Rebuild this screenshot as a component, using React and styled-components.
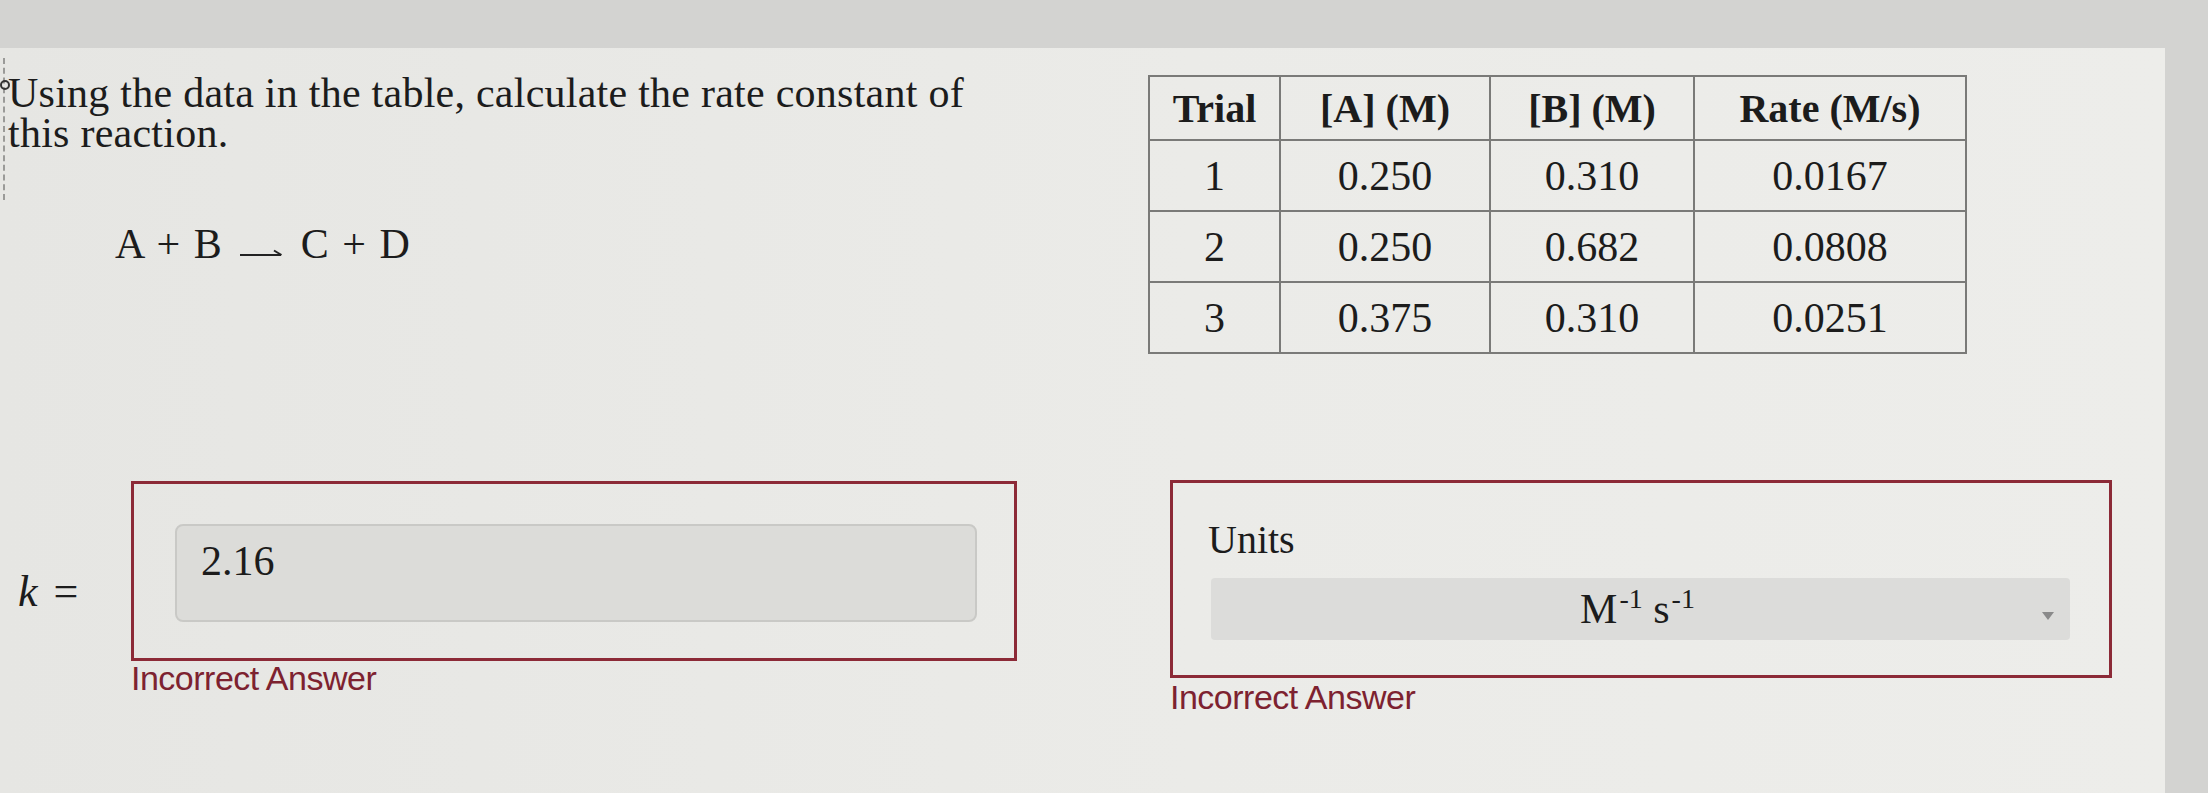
import styled, { createGlobalStyle } from "styled-components";

//Global
const GlobalStyle = createGlobalStyle`
  html, body {
    margin: 0;
    padding: 0;
    background: #d3d3d1;
  }
  body {
    width: 2208px;
    height: 793px;
    overflow: hidden;
    font-family: "Liberation Serif", "Times New Roman", serif;
    color: #1c1c1c;
  }
`;

const rows = [
  ["1", "0.250", "0.310", "0.0167"],
  ["2", "0.250", "0.682", "0.0808"],
  ["3", "0.375", "0.310", "0.0251"],
];

const colWidths = [131, 210, 204, 272];

const Arrow = () => (
  <ArrowSvg width="44" height="12" viewBox="0 0 44 12">
    <path d="M1 9 H42" stroke="#222" strokeWidth="2" fill="none" />
    <path d="M35 4.5 L42.5 9" stroke="#222" strokeWidth="2" fill="none" />
  </ArrowSvg>
);

const App = () => {
  return (
    <>
      <GlobalStyle />
      <Page>
        <TopRow>
          <QuestionBlock>
            <Question>
              Using the data in the table, calculate the rate constant of this
              reaction.
            </Question>
            <Equation>
              A + B <Arrow /> C + D
            </Equation>
          </QuestionBlock>
          <DataTable>
            <colgroup>
              {colWidths.map((w, i) => (
                <col key={i} style={{ width: w }} />
              ))}
            </colgroup>
            <thead>
              <tr>
                <HeadCell>Trial</HeadCell>
                <HeadCell>[A] (M)</HeadCell>
                <HeadCell>[B] (M)</HeadCell>
                <HeadCell>Rate (M/s)</HeadCell>
              </tr>
            </thead>
            <tbody>
              {rows.map((r) => (
                <tr key={r[0]}>
                  {r.map((v, i) => (
                    <Cell key={i}>{v}</Cell>
                  ))}
                </tr>
              ))}
            </tbody>
          </DataTable>
        </TopRow>

        <BottomRow>
          <KLabel>
            <i>k</i>
            <span>=</span>
          </KLabel>
          <AnswerColumn>
            <AnswerBox>
              <AnswerInput>2.16</AnswerInput>
            </AnswerBox>
            <Incorrect $shift={-1}>Incorrect Answer</Incorrect>
          </AnswerColumn>
          <UnitsColumn>
            <UnitsBox>
              <UnitsLabel>Units</UnitsLabel>
              <UnitsSelect>
                <span>
                  M<sup>-1</sup> s<sup>-1</sup>
                </span>
                <Caret />
              </UnitsSelect>
            </UnitsBox>
            <Incorrect $shift={1}>Incorrect Answer</Incorrect>
          </UnitsColumn>
        </BottomRow>
      </Page>
    </>
  );
};

const Page = styled.div`
  margin-top: 48px;
  margin-right: 43px;
  height: 745px;
  background: linear-gradient(90deg, #e6e6e3 0%, #ebebe8 55%, #ededea 100%);
`;

const TopRow = styled.div`
  display: flex;
  height: 300px;
`;

const QuestionBlock = styled.div`
  position: relative;
  width: 1140px;
  padding-left: 8px;
  padding-top: 25px;
  &::before {
    content: "";
    position: absolute;
    left: 3px;
    top: 10px;
    height: 142px;
    border-left: 2px dashed #9a9a98;
  }
  &::after {
    content: "";
    position: absolute;
    left: 0px;
    top: 32px;
    width: 6px;
    height: 6px;
    border: 2px solid #333;
    border-radius: 50%;
  }
`;

const Question = styled.p`
  margin: 0;
  width: 1000px;
  font-size: 42px;
  line-height: 40px;
  letter-spacing: 0.25px;
`;

const Equation = styled.div`
  margin-top: 70px;
  padding-left: 107px;
  font-size: 42px;
  line-height: 42px;
  word-spacing: 3px;
`;

const ArrowSvg = styled.svg`
  vertical-align: 0px;
  margin: 0 4px;
`;

const DataTable = styled.table`
  margin-top: 27px;
  border-collapse: collapse;
  table-layout: fixed;
  width: 817px;
  height: 272px;
  align-self: flex-start;
  th,
  td {
    border: 2px solid #7a7a78;
    text-align: center;
    padding: 0;
  }
`;

const HeadCell = styled.th`
  height: 62px;
  font-size: 40px;
  font-weight: bold;
`;

const Cell = styled.td`
  height: 69px;
  font-size: 42px;
  font-weight: normal;
`;

const BottomRow = styled.div`
  display: flex;
  align-items: flex-start;
  padding-left: 18px;
`;

const KLabel = styled.div`
  width: 113px;
  margin-top: 222px;
  font-size: 44px;
  line-height: 44px;
  display: flex;
  gap: 16px;
  i {
    font-style: italic;
  }
`;

const AnswerColumn = styled.div`
  width: 886px;
  margin-top: 133px;
`;

const AnswerBox = styled.div`
  border: 3px solid #8c2a37;
  padding: 40px 37px 36px 41px;
`;

const AnswerInput = styled.div`
  height: 80px;
  padding: 14px 24px 0;
  background: #dcdcd9;
  border: 2px solid #c9c9c6;
  border-radius: 8px;
  font-size: 42px;
  line-height: 42px;
`;

const Incorrect = styled.div`
  margin-top: ${(p) => p.$shift}px;
  font-family: "Liberation Sans", Arial, sans-serif;
  font-size: 34px;
  line-height: 36px;
  letter-spacing: -0.5px;
  color: #7d2230;
`;

const UnitsColumn = styled.div`
  width: 942px;
  margin-left: 153px;
  margin-top: 132px;
`;

const UnitsBox = styled.div`
  border: 3px solid #8c2a37;
  padding: 37px 39px 35px 35px;
`;

const UnitsLabel = styled.div`
  font-size: 40px;
  line-height: 40px;
`;

const UnitsSelect = styled.div`
  position: relative;
  margin-top: 18px;
  margin-left: 3px;
  height: 62px;
  background: #dcdcda;
  border-radius: 4px;
  display: flex;
  justify-content: center;
  align-items: flex-end;
  font-size: 42px;
  line-height: 42px;
  span {
    padding-bottom: 10px;
    margin-right: 6px;
  }
  sup {
    font-size: 28px;
    line-height: 0;
    vertical-align: 15px;
    margin-left: 2px;
  }
`;

const Caret = styled.div`
  position: absolute;
  right: 16px;
  top: 34px;
  width: 0;
  height: 0;
  border-left: 6px solid transparent;
  border-right: 6px solid transparent;
  border-top: 8px solid #8a8a8a;
`;

export default App;
